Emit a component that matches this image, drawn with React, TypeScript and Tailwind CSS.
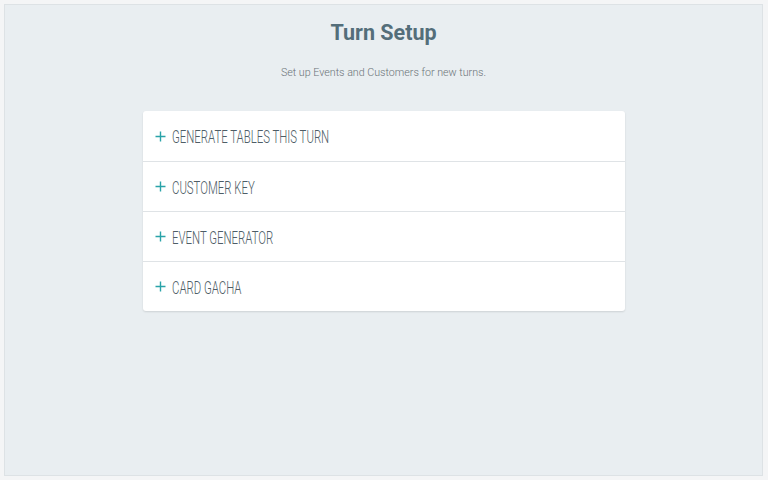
const items = [
  "GENERATE TABLES THIS TURN",
  "CUSTOMER KEY",
  "EVENT GENERATOR",
  "CARD GACHA",
];

function PlusIcon() {
  return (
    <svg width="11" height="11" viewBox="0 0 11 11" className="shrink-0">
      <path d="M5.5 0.5v10M0.5 5.5h10" stroke="#2aa3a8" strokeWidth="1.4" fill="none" />
    </svg>
  );
}

export default function App() {
  return (
    <div className="h-[480px] w-[768px] bg-[#f4f5f6] p-[4px] [font-family:Roboto,'Liberation_Sans',sans-serif]">
      <div className="flex h-[472px] w-[759px] flex-col items-center border border-[#dde2e5] bg-[#e9eef1]">
        <h1 className="mt-[13px] text-[21.5px] font-bold leading-[30px] text-[#546e7a]">
          Turn Setup
        </h1>
        <p className="mt-[18px] text-[10.7px] font-light leading-[14px] text-[#6b7378]">
          Set up Events and Customers for new turns.
        </p>
        <div className="mt-[31px] w-[482px] overflow-hidden rounded-[3px] bg-white shadow-[0_1px_2px_rgba(0,0,0,0.12)]">
          {items.map((label, i) => (
            <div
              key={label}
              className={
                "flex h-[50px] items-center gap-[6px] pl-[12px] " +
                (i > 0 ? "border-t border-[#dfe3e6]" : "")
              }
            >
              <PlusIcon />
              <span className="mt-[3px] origin-left scale-x-[0.65] text-[17.5px] font-light whitespace-nowrap text-[#4e5d66] [font-family:Roboto,sans-serif]">
                {label}
              </span>
            </div>
          ))}
        </div>
      </div>
    </div>
  );
}
